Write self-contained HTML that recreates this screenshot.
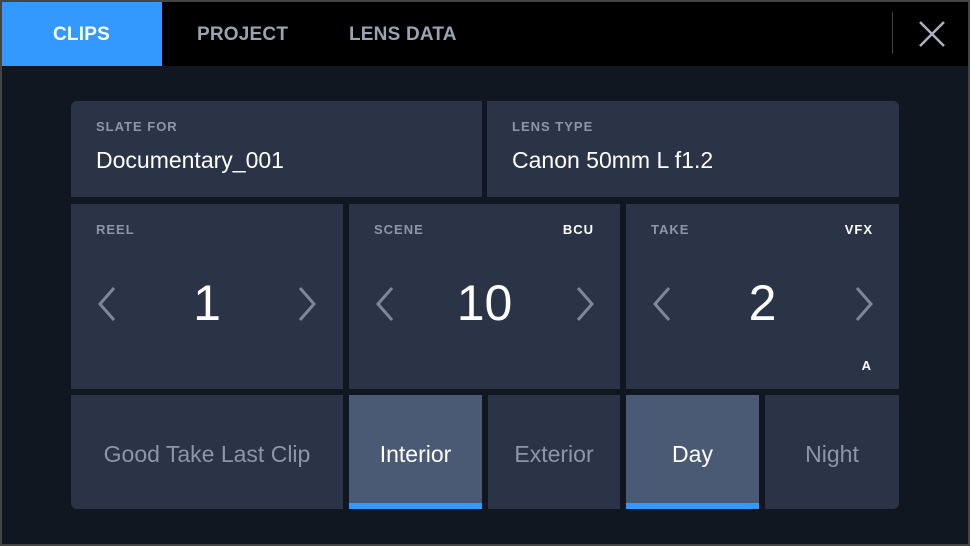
<!DOCTYPE html><html><head><style>
*{margin:0;padding:0;box-sizing:border-box}
body{width:970px;height:546px;background:#444;font-family:"Liberation Sans",sans-serif;position:relative;overflow:hidden}
.main{position:absolute;left:2px;top:2px;width:966px;height:542px;background:#111720}
.top{position:absolute;left:2px;top:2px;width:966px;height:64px;background:#000}
.tab{position:absolute;top:3px;height:64px;line-height:64px;font-weight:bold;font-size:19px;color:#9aa3b2;letter-spacing:.2px}
.c{position:absolute;background:#2a3446}
.lbl{position:absolute;left:25px;top:18px;font-size:13px;font-weight:bold;color:#8d96a6;letter-spacing:1px}
.val{position:absolute;left:25px;top:46px;font-size:23px;color:#fff}
.tag{position:absolute;right:26px;top:18px;font-size:13px;font-weight:bold;color:#fff;letter-spacing:1px}
.num{position:absolute;left:0;right:0;top:70px;text-align:center;font-size:50px;color:#fff}
.btn{position:absolute;top:395px;height:114px;line-height:118px;text-align:center;font-size:23px;color:#8d96a6;background:#2a3446}
.sel{background:#4a5a74;color:#fff;box-shadow:inset 0 -6px 0 #3399ff}
svg.ar{position:absolute;top:80px}
</style></head><body>
<div class="main"></div><div class="top"></div>
<div style="position:absolute;left:2px;top:2px;width:160px;height:64px;background:#3399ff"></div>
<div class="tab" style="left:53px;color:#fff">CLIPS</div>
<div class="tab" style="left:197px">PROJECT</div>
<div class="tab" style="left:349px">LENS DATA</div>
<div style="position:absolute;left:892px;top:12px;width:1px;height:42px;background:#444"></div>
<svg style="position:absolute;left:918px;top:20px" width="28" height="28"><path d="M2 2L26 26M26 2L2 26" stroke="#aab2bf" stroke-width="2.5"/></svg>
<div class="c" style="left:71px;top:101px;width:411px;height:96px;border-top-left-radius:6px"><div class="lbl">SLATE FOR</div><div class="val">Documentary_001</div></div>
<div class="c" style="left:487px;top:101px;width:412px;height:96px;border-top-right-radius:6px"><div class="lbl">LENS TYPE</div><div class="val">Canon 50mm L f1.2</div></div>
<div class="c" style="left:71px;top:204px;width:272px;height:185px"><div class="lbl">REEL</div><div class="num">1</div>
<svg class="ar" style="left:24px" width="24" height="40"><path d="M19 4L5 20L19 36" stroke="#7d8797" stroke-width="3" fill="none"/></svg>
<svg class="ar" style="left:224px" width="24" height="40"><path d="M5 4L19 20L5 36" stroke="#7d8797" stroke-width="3" fill="none"/></svg></div>
<div class="c" style="left:349px;top:204px;width:271px;height:185px"><div class="lbl">SCENE</div><div class="tag">BCU</div><div class="num">10</div>
<svg class="ar" style="left:24px" width="24" height="40"><path d="M19 4L5 20L19 36" stroke="#7d8797" stroke-width="3" fill="none"/></svg>
<svg class="ar" style="left:224px" width="24" height="40"><path d="M5 4L19 20L5 36" stroke="#7d8797" stroke-width="3" fill="none"/></svg></div>
<div class="c" style="left:626px;top:204px;width:273px;height:185px"><div class="lbl">TAKE</div><div class="tag">VFX</div><div class="num">2</div>
<div style="position:absolute;right:28px;top:154px;font-size:13px;font-weight:bold;color:#fff">A</div>
<svg class="ar" style="left:24px" width="24" height="40"><path d="M19 4L5 20L19 36" stroke="#7d8797" stroke-width="3" fill="none"/></svg>
<svg class="ar" style="left:226px" width="24" height="40"><path d="M5 4L19 20L5 36" stroke="#7d8797" stroke-width="3" fill="none"/></svg></div>
<div class="btn" style="left:71px;width:272px;border-bottom-left-radius:6px">Good Take Last Clip</div>
<div class="btn sel" style="left:349px;width:133px">Interior</div>
<div class="btn" style="left:488px;width:132px">Exterior</div>
<div class="btn sel" style="left:626px;width:133px">Day</div>
<div class="btn" style="left:765px;width:134px;border-bottom-right-radius:6px">Night</div>
</body></html>
